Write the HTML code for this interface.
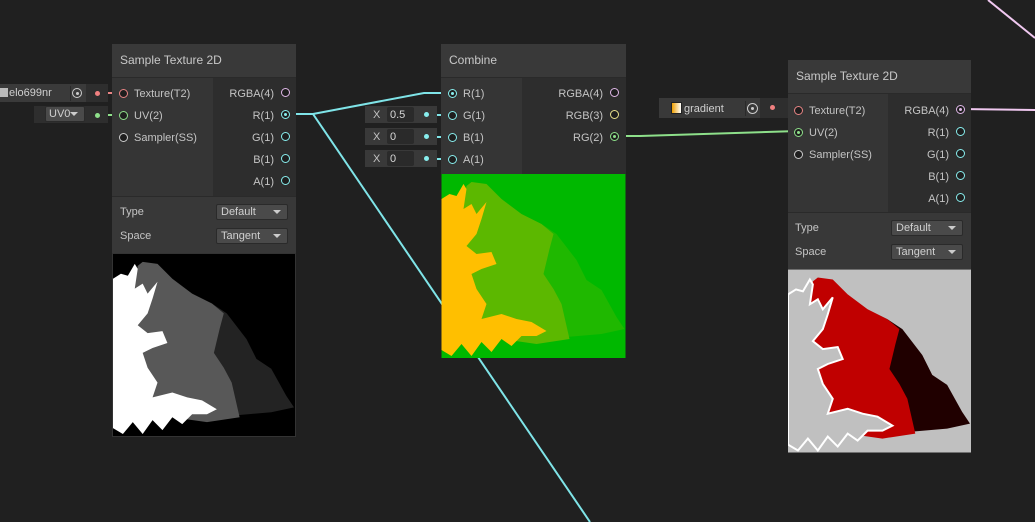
<!DOCTYPE html>
<html><head><style>
*{margin:0;padding:0;box-sizing:border-box}
body{width:1035px;height:522px;background:#202020;position:relative;overflow:hidden;font-family:"Liberation Sans",sans-serif;font-size:11px;color:#c4c4c4}
.a{position:absolute}
.hd{background:#393939;color:#c8c8c8;font-size:12px;padding-left:8px;line-height:33px;border-bottom:1px solid #2a2a2a}
.in{background:#353535}
.out{background:#2d2d2d}
.set{background:#383838;border-top:1px solid #2a2a2a}
.p{position:absolute;width:9px;height:9px;border-radius:50%;border:1.5px solid #8ee;background:#1e1e1e}
.p.f::after{content:"";position:absolute;left:1.5px;top:1.5px;width:3px;height:3px;border-radius:50%;background:currentColor}
.l{position:absolute;line-height:14px;white-space:nowrap}
.r{text-align:right}
.dd{position:absolute;background:#4a4a4a;border:1px solid #2a2a2a;border-radius:2px;height:16px;line-height:14px;padding-left:4px;color:#d0d0d0}
.dd::after{content:"";position:absolute;right:6px;top:5px;border-left:4px solid transparent;border-right:4px solid transparent;border-top:4px solid #ccc}
.fld{position:absolute;background:#393939;height:18px}
.dot{position:absolute;width:5px;height:5px;border-radius:50%}
</style></head><body>
<svg class="a" style="left:0;top:0" width="1035" height="522">
<g fill="none" stroke-width="2">
<path d="M289,114 L313,114 L424,93 L452,93" stroke="#7fe4e8"/>
<path d="M313,114 L590,522" stroke="#7fe4e8"/>
<path d="M614,136 L640,136 L798,131" stroke="#8ee08a"/>
<path d="M960,109 L1035,110" stroke="#f0c8f0"/>
<path d="M988,0 L1035,38" stroke="#f0c8f0"/>
<path d="M97,93 L123,93" stroke="#e88484"/>
<path d="M97,115 L123,115" stroke="#8ee08a"/>
<path d="M426,115 L452,115 M426,137 L452,137 M426,159 L452,159" stroke="#7fe4e8"/>
<path d="M769,110 L798,110" stroke="#e88484"/>
</g></svg>

<div class="fld" style="left:0;top:84px;width:86px;background:#3a3a3a"></div>
<div class="a" style="left:0;top:88px;width:8px;height:9px;background:#bbb"></div>
<div class="l" style="left:9px;top:86px;color:#d0d0d0">elo699nr</div>
<div class="a" style="left:70px;top:86px;width:15px;height:15px;border-left:1px solid #2a2a2a"></div>
<div class="a" style="left:72px;top:88px;width:10px;height:10px;border:1.5px solid #ccc;border-radius:50%"></div>
<div class="a" style="left:75.5px;top:91.5px;width:3px;height:3px;background:#ccc;border-radius:50%"></div>
<div class="fld" style="left:86px;top:84px;width:22px;background:#2e2e2e"></div>
<div class="dot" style="left:95px;top:91px;background:#f08080"></div>
<div class="fld" style="left:34px;top:106px;width:74px;height:17px;background:#2e2e2e"></div>
<div class="dd" style="left:45px;top:106px;width:40px;height:16px;padding-left:3px">UV0</div>
<div class="dot" style="left:95px;top:113px;background:#8ee08a"></div>

<div class="a hd" style="left:112px;top:44px;width:184px;height:34px">Sample Texture 2D</div>
<div class="a in" style="left:112px;top:78px;width:101px;height:118px"></div>
<div class="a out" style="left:213px;top:78px;width:83px;height:118px"></div>
<div class="p" style="left:119px;top:89px;border-color:#e88484"></div>
<div class="p" style="left:119px;top:111px;border-color:#8ee08a"></div>
<div class="p" style="left:119px;top:133px;border-color:#ccc"></div>
<div class="l" style="left:134px;top:87px">Texture(T2)</div>
<div class="l" style="left:134px;top:109px">UV(2)</div>
<div class="l" style="left:134px;top:131px">Sampler(SS)</div>
<div class="l r" style="left:213px;width:61px;top:87px">RGBA(4)</div>
<div class="l r" style="left:213px;width:61px;top:109px">R(1)</div>
<div class="l r" style="left:213px;width:61px;top:131px">G(1)</div>
<div class="l r" style="left:213px;width:61px;top:153px">B(1)</div>
<div class="l r" style="left:213px;width:61px;top:175px">A(1)</div>
<div class="p" style="left:281px;top:88px;border-color:#e0b8e8"></div>
<div class="p f" style="left:281px;top:110px;color:#8ee"></div>
<div class="p" style="left:281px;top:132px"></div>
<div class="p" style="left:281px;top:154px"></div>
<div class="p" style="left:281px;top:176px"></div>
<div class="a set" style="left:112px;top:196px;width:184px;height:57px"></div>
<div class="l" style="left:120px;top:205px">Type</div>
<div class="l" style="left:120px;top:229px">Space</div>
<div class="dd" style="left:216px;top:204px;width:72px">Default</div>
<div class="dd" style="left:216px;top:228px;width:72px">Tangent</div>
<svg class="a" style="left:112px;top:253px;border:1px solid #333" width="184" height="184" viewBox="0 0 184 184">
<rect width="184" height="184" fill="#000"/>
<path d="M75,38 L100,50 L115,60 L135,86 L145,106 L160,116 L175,143 L183,155 L160,160 L125,163 L110,160 L100,130 L95,115 Z" fill="#232323"/>
<path d="M25,12 L30,8 L45,10 L60,25 L80,40 L100,50 L112,60 L108,75 L102,100 L112,115 L120,130 L128,165 L95,170 L60,165 L40,160 L30,140 L20,120 L15,80 L20,40 Z" fill="#585858"/>
<path d="M0,25 L8,20 L15,22 L22,10 L25,15 L22,35 L30,30 L35,40 L45,28 L40,45 L35,60 L25,72 L35,80 L50,78 L55,90 L40,95 L30,100 L35,115 L45,130 L40,145 L60,140 L75,145 L90,148 L105,157 L95,162 L80,162 L70,172 L60,165 L50,178 L40,168 L30,182 L20,170 L10,182 L0,176 Z" fill="#fff"/>
</svg>

<div class="fld" style="left:365px;top:106px;width:72px;height:17px"></div>
<div class="fld" style="left:365px;top:128px;width:72px;height:17px"></div>
<div class="fld" style="left:365px;top:150px;width:72px;height:17px"></div>
<div class="l" style="left:373px;top:108px">X</div>
<div class="l" style="left:373px;top:130px">X</div>
<div class="l" style="left:373px;top:152px">X</div>
<div class="a" style="left:387px;top:107px;width:27px;height:15px;background:#2a2a2a;border-radius:2px"></div>
<div class="a" style="left:387px;top:129px;width:27px;height:15px;background:#2a2a2a;border-radius:2px"></div>
<div class="a" style="left:387px;top:151px;width:27px;height:15px;background:#2a2a2a;border-radius:2px"></div>
<div class="l" style="left:390px;top:108px;color:#d8d8d8">0.5</div>
<div class="l" style="left:390px;top:130px;color:#d8d8d8">0</div>
<div class="l" style="left:390px;top:152px;color:#d8d8d8">0</div>
<div class="dot" style="left:424px;top:112px;background:#8ee"></div>
<div class="dot" style="left:424px;top:134px;background:#8ee"></div>
<div class="dot" style="left:424px;top:156px;background:#8ee"></div>

<div class="a hd" style="left:441px;top:44px;width:185px;height:34px">Combine</div>
<div class="a in" style="left:441px;top:78px;width:81px;height:96px"></div>
<div class="a out" style="left:522px;top:78px;width:104px;height:96px"></div>
<div class="p f" style="left:448px;top:89px;color:#8ee"></div>
<div class="p" style="left:448px;top:111px"></div>
<div class="p" style="left:448px;top:133px"></div>
<div class="p" style="left:448px;top:155px"></div>
<div class="l" style="left:463px;top:87px">R(1)</div>
<div class="l" style="left:463px;top:109px">G(1)</div>
<div class="l" style="left:463px;top:131px">B(1)</div>
<div class="l" style="left:463px;top:153px">A(1)</div>
<div class="l r" style="left:522px;width:81px;top:87px">RGBA(4)</div>
<div class="l r" style="left:522px;width:81px;top:109px">RGB(3)</div>
<div class="l r" style="left:522px;width:81px;top:131px">RG(2)</div>
<div class="p" style="left:610px;top:88px;border-color:#e0b8e8"></div>
<div class="p" style="left:610px;top:110px;border-color:#e8e08a"></div>
<div class="p f" style="left:610px;top:132px;border-color:#8ee08a;color:#8ee08a"></div>
<svg class="a" style="left:441px;top:174px" width="185" height="184" viewBox="0 0 184 184">
<rect width="184" height="184" fill="#00b800"/>
<path d="M75,38 L100,50 L115,60 L135,86 L145,106 L160,116 L175,143 L183,155 L160,160 L125,163 L110,160 L100,130 L95,115 Z" fill="#1fb800"/>
<path d="M25,12 L30,8 L45,10 L60,25 L80,40 L100,50 L112,60 L108,75 L102,100 L112,115 L120,130 L128,165 L95,170 L60,165 L40,160 L30,140 L20,120 L15,80 L20,40 Z" fill="#5cb800"/>
<path d="M0,25 L8,20 L15,22 L22,10 L25,15 L22,35 L30,30 L35,40 L45,28 L40,45 L35,60 L25,72 L35,80 L50,78 L55,90 L40,95 L30,100 L35,115 L45,130 L40,145 L60,140 L75,145 L90,148 L105,157 L95,162 L80,162 L70,172 L60,165 L50,178 L40,168 L30,182 L20,170 L10,182 L0,176 Z" fill="#ffbf00"/>
</svg>

<div class="fld" style="left:659px;top:98px;width:110px;height:20px"></div>
<div class="a" style="left:671px;top:102px;width:11px;height:12px;background:linear-gradient(90deg,#f0a000,#fff);border:1px solid #222"></div>
<div class="l" style="left:684px;top:102px;color:#d0d0d0">gradient</div>
<div class="a" style="left:745px;top:101px;width:1px;height:15px;background:#2a2a2a"></div>
<div class="a" style="left:747px;top:103px;width:11px;height:11px;border:1.5px solid #ccc;border-radius:50%"></div>
<div class="a" style="left:751px;top:107px;width:3px;height:3px;background:#ccc;border-radius:50%"></div>
<div class="fld" style="left:760px;top:98px;width:28px;height:20px;background:#2e2e2e"></div>
<div class="dot" style="left:770px;top:105px;background:#f08080"></div>

<div class="a hd" style="left:788px;top:60px;width:183px;height:34px">Sample Texture 2D</div>
<div class="a in" style="left:788px;top:94px;width:100px;height:118px"></div>
<div class="a out" style="left:888px;top:94px;width:83px;height:118px"></div>
<div class="p" style="left:794px;top:106px;border-color:#e88484"></div>
<div class="p f" style="left:794px;top:128px;border-color:#8ee08a;color:#8ee08a"></div>
<div class="p" style="left:794px;top:150px;border-color:#ccc"></div>
<div class="l" style="left:809px;top:104px">Texture(T2)</div>
<div class="l" style="left:809px;top:126px">UV(2)</div>
<div class="l" style="left:809px;top:148px">Sampler(SS)</div>
<div class="l r" style="left:888px;width:61px;top:104px">RGBA(4)</div>
<div class="l r" style="left:888px;width:61px;top:126px">R(1)</div>
<div class="l r" style="left:888px;width:61px;top:148px">G(1)</div>
<div class="l r" style="left:888px;width:61px;top:170px">B(1)</div>
<div class="l r" style="left:888px;width:61px;top:192px">A(1)</div>
<div class="p f" style="left:956px;top:105px;border-color:#e0b8e8;color:#e0b8e8"></div>
<div class="p" style="left:956px;top:127px"></div>
<div class="p" style="left:956px;top:149px"></div>
<div class="p" style="left:956px;top:171px"></div>
<div class="p" style="left:956px;top:193px"></div>
<div class="a set" style="left:788px;top:212px;width:183px;height:57px"></div>
<div class="l" style="left:795px;top:221px">Type</div>
<div class="l" style="left:795px;top:245px">Space</div>
<div class="dd" style="left:891px;top:220px;width:72px">Default</div>
<div class="dd" style="left:891px;top:244px;width:72px">Tangent</div>
<svg class="a" style="left:788px;top:269px" width="183" height="184" viewBox="0 0 184 184">
<rect width="184" height="184" fill="#c0c0c0"/>
<path d="M75,38 L100,50 L115,60 L135,86 L145,106 L160,116 L175,143 L183,155 L160,160 L125,163 L110,160 L100,130 L95,115 Z" fill="#200000"/>
<path d="M25,12 L30,8 L45,10 L60,25 L80,40 L100,50 L112,60 L108,75 L102,100 L112,115 L120,130 L128,165 L95,170 L60,165 L40,160 L30,140 L20,120 L15,80 L20,40 Z" fill="#c00000"/>
<path d="M0,25 L8,20 L15,22 L22,10 L25,15 L22,35 L30,30 L35,40 L45,28 L40,45 L35,60 L25,72 L35,80 L50,78 L55,90 L40,95 L30,100 L35,115 L45,130 L40,145 L60,140 L75,145 L90,148 L105,157 L95,162 L80,162 L70,172 L60,165 L50,178 L40,168 L30,182 L20,170 L10,182 L0,176 Z" fill="#c0c0c0" stroke="#fff" stroke-width="2"/>
</svg>
</body></html>
